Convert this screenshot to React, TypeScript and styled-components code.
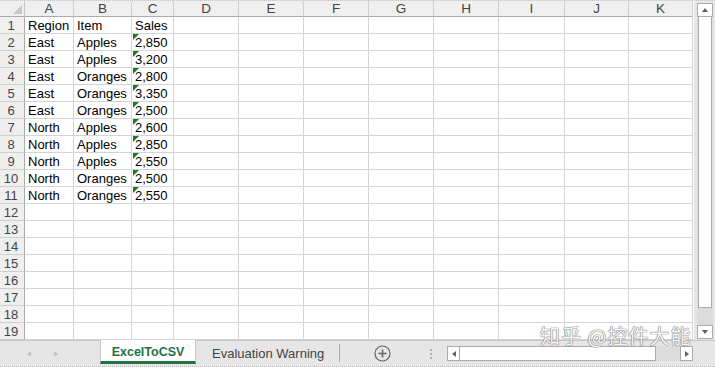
import React from "react";
import styled, { createGlobalStyle } from "styled-components";

const Global = createGlobalStyle`
  html, body { margin: 0; padding: 0; background: #e6e6e6; }
  body { font-family: "Liberation Sans", Arial, sans-serif; }
  * { box-sizing: border-box; }
`;

const COLS = [25, 49, 58, 42, 65, 65, 65, 65, 65, 66, 64, 64];
const LETTERS = ["A", "B", "C", "D", "E", "F", "G", "H", "I", "J", "K"];

const data: [string, string, string][] = [
  ["Region", "Item", "Sales"],
  ["East", "Apples", "2,850"],
  ["East", "Apples", "3,200"],
  ["East", "Oranges", "2,800"],
  ["East", "Oranges", "3,350"],
  ["East", "Oranges", "2,500"],
  ["North", "Apples", "2,600"],
  ["North", "Apples", "2,850"],
  ["North", "Apples", "2,550"],
  ["North", "Oranges", "2,500"],
  ["North", "Oranges", "2,550"],
];

const Page = styled.div`
  width: 715px;
  height: 367px;
  display: flex;
  flex-direction: column;
  background: #e6e6e6;
  overflow: hidden;
  position: relative;
`;

const Main = styled.div`
  display: flex;
  height: 340px;
  border-top: 1px dotted #c8c8c8;
`;

const Sheet = styled.div`
  display: grid;
  grid-template-columns: ${COLS.map((c) => c + "px").join(" ")};
  grid-template-rows: 16px repeat(19, 17px);
  background: #fff;
  width: 694px;
`;

const Corner = styled.div`
  background: #efefef;
  border-right: 1px solid #c6c6c6;
  border-bottom: 1px solid #ababab;
  position: relative;
  &::after {
    content: "";
    position: absolute;
    right: 2px;
    bottom: 2px;
    width: 0;
    height: 0;
    border-left: 9px solid transparent;
    border-bottom: 9px solid #c6c6c6;
  }
`;

const ColHead = styled.div`
  background: #efefef;
  border-right: 1px solid #cfcfcf;
  border-bottom: 1px solid #ababab;
  color: #444;
  font-size: 13.5px;
  line-height: 16px;
  text-align: center;
`;

const RowHead = styled.div`
  background: #efefef;
  border-right: 1px solid #ababab;
  border-bottom: 1px solid #cfcfcf;
  color: #444;
  font-size: 13px;
  line-height: 17px;
  text-align: center;
  padding-right: 2px;
`;

const Cell = styled.div<{ $flag?: boolean }>`
  border-right: 1px solid #d4d4d4;
  border-bottom: 1px solid #d4d4d4;
  font-size: 13px;
  line-height: 17px;
  color: #000;
  padding-left: 3px;
  white-space: nowrap;
  overflow: visible;
  position: relative;
  &::before {
    content: "";
    display: ${(p) => (p.$flag ? "block" : "none")};
    position: absolute;
    left: 1px;
    top: 0;
    width: 0;
    height: 0;
    border-top: 6px solid #1f7a1f;
    border-right: 6px solid transparent;
  }
`;

const VScroll = styled.div`
  margin-left: 3px;
  margin-top: 2px;
  width: 16px;
  height: 336px;
  display: flex;
  flex-direction: column;
  background: #dcdcdc;
`;

const ArrowBox = styled.div`
  width: 16px;
  height: 14px;
  background: #fff;
  border: 1px solid #ababab;
  display: flex;
  align-items: center;
  justify-content: center;
  flex-shrink: 0;
`;

const Tri = styled.div<{ $dir: "up" | "down" | "left" | "right"; $c?: string }>`
  width: 0;
  height: 0;
  ${(p) =>
    p.$dir === "up"
      ? `border-left:3.5px solid transparent;border-right:3.5px solid transparent;border-bottom:4px solid ${p.$c || "#606060"};`
      : p.$dir === "down"
      ? `border-left:3.5px solid transparent;border-right:3.5px solid transparent;border-top:4px solid ${p.$c || "#606060"};`
      : p.$dir === "left"
      ? `border-top:3.5px solid transparent;border-bottom:3.5px solid transparent;border-right:4px solid ${p.$c || "#606060"};`
      : `border-top:3.5px solid transparent;border-bottom:3.5px solid transparent;border-left:4px solid ${p.$c || "#606060"};`}
`;

const VThumb = styled.div`
  height: 291px;
  margin: 0 1px;
  background: #fff;
  border: 1px solid #ababab;
  border-top: none;
`;

const VSpace = styled.div`
  flex: 1;
`;

const TabBar = styled.div`
  height: 27px;
  display: flex;
  align-items: flex-start;
  border-top: 1px solid #c6c6c6;
  border-bottom: 1px dotted #c0c0c0;
`;

const NavArea = styled.div`
  width: 100px;
  height: 25px;
  display: flex;
  align-items: center;
  gap: 23px;
  padding-left: 27px;
`;

const ActiveTab = styled.div`
  width: 96px;
  height: 24px;
  margin-top: -1px;
  background: #fff;
  border-left: 1px solid #c6c6c6;
  border-right: 1px solid #c6c6c6;
  border-bottom: 3px solid #217346;
  color: #217346;
  font-weight: bold;
  font-size: 12.5px;
  display: flex;
  align-items: center;
  justify-content: center;
  padding-top: 2px;
`;

const Tab = styled.div`
  padding: 0 15px 0 16px;
  height: 25px;
  display: flex;
  align-items: center;
  font-size: 13px;
  color: #444;
`;

const Sep = styled.div`
  width: 1px;
  height: 18px;
  margin-top: 3px;
  background: #a8a8a8;
`;

const PlusWrap = styled.div`
  width: 82px;
  height: 25px;
  display: flex;
  align-items: center;
  justify-content: center;
  padding-left: 2px;
`;

const Dots = styled.div`
  width: 18px;
  height: 25px;
  display: flex;
  flex-direction: column;
  align-items: center;
  justify-content: center;
  gap: 2px;
  span {
    width: 2px;
    height: 2px;
    background: #b0b0b0;
  }
`;

const HScroll = styled.div`
  margin-left: 7px;
  margin-top: 5px;
  display: flex;
  width: 246px;
  height: 15px;
  background: #dcdcdc;
`;

const HArrow = styled.div`
  width: 13px;
  height: 15px;
  background: #fff;
  border: 1px solid #ababab;
  display: flex;
  align-items: center;
  justify-content: center;
`;

const HThumb = styled.div`
  width: 196px;
  height: 15px;
  background: #fff;
  border: 1px solid #ababab;
  border-left: none;
`;

const Watermark = styled.div`
  position: absolute;
  left: 540px;
  top: 321px;
  font-family: "Noto Sans CJK SC", sans-serif;
  font-size: 20px;
  color: rgba(255, 255, 255, 0.95);
  text-shadow: 0 0 1px #777, 0 0 1px #777, 0 0 1px #999;
  letter-spacing: 1px;
  white-space: nowrap;
  pointer-events: none;
`;

export default function App() {
  const cells: React.ReactNode[] = [];
  cells.push(<Corner key="corner" />);
  LETTERS.forEach((l) => cells.push(<ColHead key={"h" + l}>{l}</ColHead>));
  for (let r = 0; r < 19; r++) {
    cells.push(<RowHead key={"r" + r}>{r + 1}</RowHead>);
    const row = data[r];
    for (let c = 0; c < 11; c++) {
      const v = row && c < 3 ? row[c] : "";
      const flag = !!row && r > 0 && c === 2;
      cells.push(
        <Cell key={r + "-" + c} $flag={flag}>
          {v}
        </Cell>
      );
    }
  }
  return (
    <Page>
      <Global />
      <Main>
        <Sheet>{cells}</Sheet>
        <VScroll>
          <ArrowBox>
            <Tri $dir="up" />
          </ArrowBox>
          <VThumb />
          <VSpace />
          <ArrowBox>
            <Tri $dir="down" />
          </ArrowBox>
        </VScroll>
      </Main>
      <TabBar>
        <NavArea>
          <Tri $dir="left" $c="#c4c4c4" />
          <Tri $dir="right" $c="#c4c4c4" />
        </NavArea>
        <ActiveTab>ExcelToCSV</ActiveTab>
        <Tab>Evaluation Warning</Tab>
        <Sep />
        <PlusWrap>
          <svg width="17" height="17" viewBox="0 0 17 17">
            <circle cx="8.5" cy="8.5" r="7.5" fill="none" stroke="#666" strokeWidth="1.2" />
            <path d="M8.5 4.5v8M4.5 8.5h8" stroke="#666" strokeWidth="1.6" />
          </svg>
        </PlusWrap>
        <Dots>
          <span />
          <span />
          <span />
        </Dots>
        <HScroll>
          <HArrow>
            <Tri $dir="left" />
          </HArrow>
          <HThumb />
          <VSpace />
          <HArrow>
            <Tri $dir="right" />
          </HArrow>
        </HScroll>
      </TabBar>
      <Watermark>知乎 @控件大能</Watermark>
    </Page>
  );
}
